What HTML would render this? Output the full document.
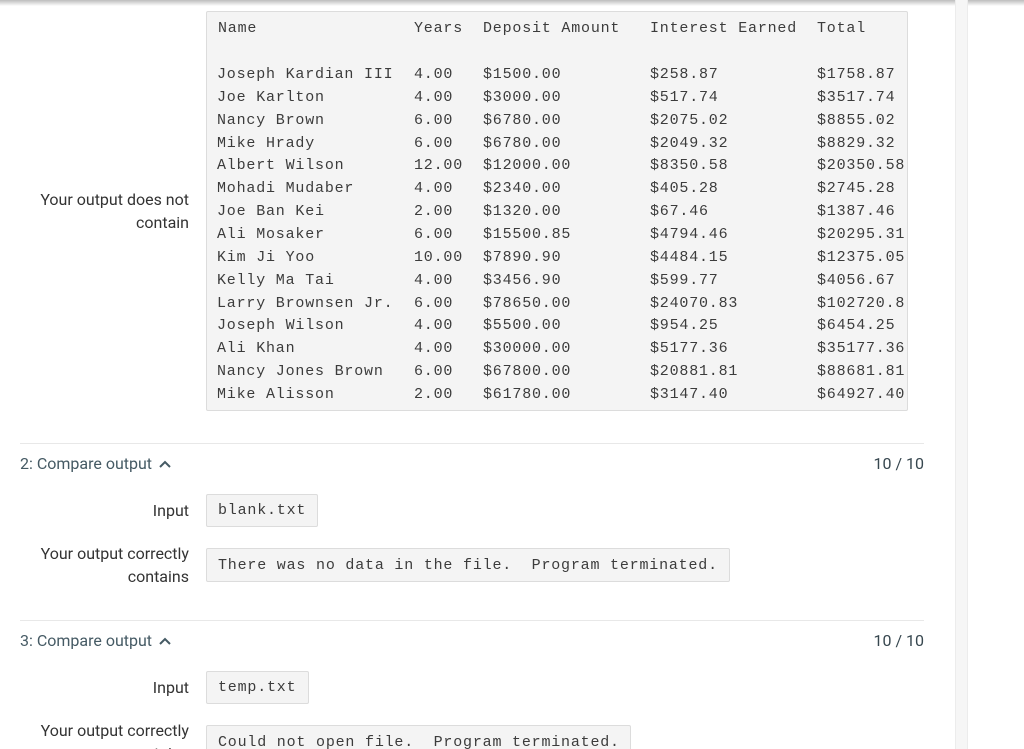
<!DOCTYPE html>
<html><head><meta charset="utf-8"><style>
*{margin:0;padding:0;box-sizing:border-box}
html,body{width:1024px;height:749px;overflow:hidden}
body{background:#fff;position:relative;font-family:Roboto,"Liberation Sans",sans-serif}
.topsh{position:absolute;left:0;top:0;width:1024px;height:6px;background:linear-gradient(#bdbdbd,#fff)}
.strip{position:absolute;left:955px;top:0;width:13px;height:749px;background:#f6f6f6;border-left:1px solid #ececec;border-right:1px solid #ececec}
.mono{font-family:"Liberation Mono",monospace;font-size:15px;letter-spacing:0.8px;color:#3c3c3c;white-space:pre}
.box{position:absolute;background:#f4f4f4;border:1px solid #dcdcdc;border-radius:2px}
.t{position:absolute;top:0}
.lab{position:absolute;right:835px;text-align:right;font-size:16px;color:#333;line-height:23px}
.hdr{position:absolute;left:20px;font-size:16px;color:#455a64}
.score{position:absolute;right:100px;font-size:16px;color:#37474f}
.sep{position:absolute;left:20px;width:904px;height:1px;background:#e8e8e8}
</style></head><body>
<div class="topsh"></div>
<div class="strip"></div>
<div class="box" style="left:206px;top:11px;width:702px;height:400px;overflow:hidden"><div class="mono" style="position:absolute;left:11px;top:6px;line-height:22.86px;width:690px;height:23px"><span class="t" style="left:0">Name</span><span class="t" style="left:196px">Years</span><span class="t" style="left:265px">Deposit Amount</span><span class="t" style="left:432px">Interest Earned</span><span class="t" style="left:599px">Total</span></div></div>
<div class="lab" style="top:188px">Your output does not<br>contain</div>

<div class="sep" style="top:443px"></div>
<div class="hdr" style="top:454px">2: Compare output <svg width="14" height="10" viewBox="0 0 14 10" style="margin-left:2px"><path d="M2 8 L7 3 L12 8" stroke="#455a64" stroke-width="2" fill="none"/></svg></div>
<div class="score" style="top:454px">10 / 10</div>
<div class="lab" style="top:499px">Input</div>
<div class="box mono" style="left:206px;top:494px;width:112px;height:33px;padding:7px 11px">blank.txt</div>
<div class="lab" style="top:542px">Your output correctly<br>contains</div>
<div class="box mono" style="left:206px;top:548px;width:524px;height:34px;padding:8px 11px">There was no data in the file.  Program terminated.</div>

<div class="sep" style="top:620px"></div>
<div class="hdr" style="top:631px">3: Compare output <svg width="14" height="10" viewBox="0 0 14 10" style="margin-left:2px"><path d="M2 8 L7 3 L12 8" stroke="#455a64" stroke-width="2" fill="none"/></svg></div>
<div class="score" style="top:631px">10 / 10</div>
<div class="lab" style="top:676px">Input</div>
<div class="box mono" style="left:206px;top:671px;width:103px;height:33px;padding:7px 11px">temp.txt</div>
<div class="lab" style="top:719px">Your output correctly<br>contains</div>
<div class="box mono" style="left:206px;top:725px;width:425px;height:34px;padding:8px 11px">Could not open file.  Program terminated.</div>

<div class="mono" style="position:absolute;left:217px;top:64px;line-height:22.86px;width:690px;height:345px;overflow:hidden;white-space:nowrap"><span class="t" style="left:0">Joseph Kardian III<br>Joe Karlton<br>Nancy Brown<br>Mike Hrady<br>Albert Wilson<br>Mohadi Mudaber<br>Joe Ban Kei<br>Ali Mosaker<br>Kim Ji Yoo<br>Kelly Ma Tai<br>Larry Brownsen Jr.<br>Joseph Wilson<br>Ali Khan<br>Nancy Jones Brown<br>Mike Alisson</span><span class="t" style="left:197px">4.00<br>4.00<br>6.00<br>6.00<br>12.00<br>4.00<br>2.00<br>6.00<br>10.00<br>4.00<br>6.00<br>4.00<br>4.00<br>6.00<br>2.00</span><span class="t" style="left:266px">$1500.00<br>$3000.00<br>$6780.00<br>$6780.00<br>$12000.00<br>$2340.00<br>$1320.00<br>$15500.85<br>$7890.90<br>$3456.90<br>$78650.00<br>$5500.00<br>$30000.00<br>$67800.00<br>$61780.00</span><span class="t" style="left:433px">$258.87<br>$517.74<br>$2075.02<br>$2049.32<br>$8350.58<br>$405.28<br>$67.46<br>$4794.46<br>$4484.15<br>$599.77<br>$24070.83<br>$954.25<br>$5177.36<br>$20881.81<br>$3147.40</span><span class="t" style="left:600px">$1758.87<br>$3517.74<br>$8855.02<br>$8829.32<br>$20350.58<br>$2745.28<br>$1387.46<br>$20295.31<br>$12375.05<br>$4056.67<br>$102720.8<br>$6454.25<br>$35177.36<br>$88681.81<br>$64927.40</span></div>
</body></html>
